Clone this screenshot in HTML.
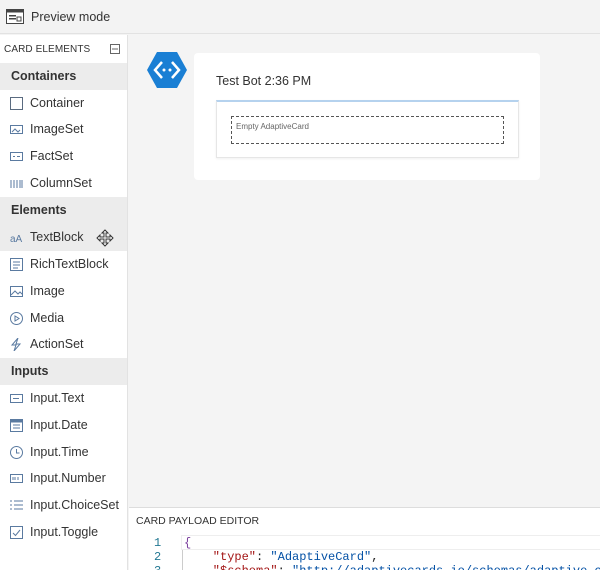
<!DOCTYPE html>
<html style="overflow:hidden;width:600px;height:570px"><head><meta charset="utf-8">
<style>
*{margin:0;padding:0;box-sizing:border-box}
body{width:600px;height:570px;overflow:hidden;font-family:"Liberation Sans",sans-serif;background:#f4f4f4;position:relative;color:#222}
.top{position:absolute;left:0;top:0;width:600px;height:34px;background:#f3f3f3;border-bottom:1px solid #e2e2e2}
.top span{position:absolute;left:31px;top:10px;font-size:12.5px;color:#333}
.side{position:absolute;left:0;top:35px;width:128px;height:535px;background:#fff;border-right:1px solid #e2e2e2;overflow:hidden}
.sh{position:absolute;left:4px;top:9px;font-size:10px;color:#333;letter-spacing:.1px}
.row{position:absolute;left:0;width:127px;height:27px;font-size:12.5px;color:#333}
.row.h{background:#ececec;font-weight:bold;padding-left:11px;line-height:27px}
.row.hv{background:#ececec}
.row .t{position:absolute;left:30px;top:6px}
.row svg{position:absolute;left:10px;top:7px}
.card{position:absolute;left:194px;top:53px;width:346px;height:127px;background:#fff;border-radius:4px}
.inner{position:absolute;left:216px;top:100px;width:303px;height:58px;background:#fff;border:1px solid #e6e6e6;border-top:2px solid #b5d2ee;box-shadow:0 1px 2px rgba(0,0,0,.06)}
.dash{position:absolute;left:231px;top:116px;width:273px;height:28px;border:1px dashed #555}
.ed{position:absolute;left:129px;top:507px;width:471px;height:63px;background:#fff;border-top:1px solid #ddd;overflow:hidden}
.code{font-family:"Liberation Mono",monospace;font-size:12px;position:absolute;white-space:pre}
</style></head><body>
<div class="top">
<svg style="position:absolute;left:6px;top:9px" width="18" height="15" viewBox="0 0 18 15"><rect x="0.5" y="0.5" width="17" height="14" fill="#fff" stroke="#444"/><rect x="0.5" y="0.5" width="17" height="3" fill="#444"/><rect x="3" y="6" width="7" height="1.5" fill="#444"/><rect x="3" y="9" width="7" height="1.5" fill="#444"/><rect x="11" y="8" width="4" height="4" fill="none" stroke="#444"/></svg>
<span>Preview mode</span></div>
<div class="side">
<div class="sh">CARD ELEMENTS</div>
<svg style="position:absolute;left:110px;top:9px" width="10" height="10"><rect x="0.5" y="0.5" width="9" height="9" fill="none" stroke="#666"/><rect x="2" y="4.5" width="6" height="1" fill="#666"/></svg>
<div class="row h" style="top:28px">Containers</div>
<div class="row" style="top:55px"><svg width="13" height="13"><rect x="0.5" y="0.5" width="12" height="12" fill="none" stroke="#5a6b80"/></svg><span class="t">Container</span></div>
<div class="row" style="top:81px"><svg width="13" height="13"><rect x="0.5" y="2.5" width="12" height="8" fill="none" stroke="#5a7aa0"/><path d="M2 9l3-3 3 3 2-2" stroke="#5a7aa0" fill="none"/></svg><span class="t">ImageSet</span></div>
<div class="row" style="top:108px"><svg width="13" height="13"><rect x="0.5" y="2.5" width="12" height="8" fill="none" stroke="#5a7aa0"/><path d="M3 6.5h2M7 6.5h3" stroke="#5a7aa0"/></svg><span class="t">FactSet</span></div>
<div class="row" style="top:135px"><svg width="13" height="13"><path d="M1 3v8M4 3v8M7 3v8M10 3v8M12 3v8" stroke="#5a7aa0"/></svg><span class="t">ColumnSet</span></div>
<div class="row h" style="top:162px">Elements</div>
<div class="row hv" style="top:189px"><svg width="16" height="13"><text x="0" y="11" font-size="10" fill="#5a7aa0" font-family="Liberation Sans">aA</text></svg><span class="t">TextBlock</span>
<svg style="left:96px;top:5px" width="18" height="18" viewBox="0 0 18 18"><path d="M9 1l3 3h-2v4h4V6l3 3-3 3v-2h-4v4h2l-3 3-3-3h2v-4H4v2L1 9l3-3v2h4V4H6z" fill="#fff" stroke="#333" stroke-width="1"/></svg></div>
<div class="row" style="top:216px"><svg width="13" height="13"><rect x="0.5" y="0.5" width="12" height="12" fill="none" stroke="#5a7aa0"/><path d="M3 4h7M3 7h7M3 10h5" stroke="#5a7aa0"/></svg><span class="t">RichTextBlock</span></div>
<div class="row" style="top:243px"><svg width="13" height="13"><rect x="0.5" y="1.5" width="12" height="10" fill="none" stroke="#5a7aa0"/><path d="M1 10l4-4 3 3 2-2 3 3" stroke="#5a7aa0" fill="none"/></svg><span class="t">Image</span></div>
<div class="row" style="top:270px"><svg width="13" height="13"><circle cx="6.5" cy="6.5" r="6" fill="none" stroke="#5a7aa0"/><path d="M5 4v5l4-2.5z" fill="none" stroke="#5a7aa0"/></svg><span class="t">Media</span></div>
<div class="row" style="top:296px"><svg width="13" height="13"><path d="M8 0L2 7h4l-2 6 6-7H6z" fill="none" stroke="#5a7aa0"/></svg><span class="t">ActionSet</span></div>
<div class="row h" style="top:323px">Inputs</div>
<div class="row" style="top:350px"><svg width="13" height="13"><rect x="0.5" y="2.5" width="12" height="8" fill="none" stroke="#5a7aa0"/><path d="M3 6.5h6" stroke="#5a7aa0"/></svg><span class="t">Input.Text</span></div>
<div class="row" style="top:377px"><svg width="13" height="13"><rect x="0.5" y="0.5" width="12" height="12" fill="none" stroke="#5a7aa0"/><rect x="0.5" y="0.5" width="12" height="3" fill="#5a7aa0"/><path d="M3 6h7M3 9h7" stroke="#5a7aa0"/></svg><span class="t">Input.Date</span></div>
<div class="row" style="top:404px"><svg width="13" height="13"><circle cx="6.5" cy="6.5" r="6" fill="none" stroke="#5a7aa0"/><path d="M6.5 3v4h3" stroke="#5a7aa0" fill="none"/></svg><span class="t">Input.Time</span></div>
<div class="row" style="top:430px"><svg width="13" height="13"><rect x="0.5" y="2.5" width="12" height="8" fill="none" stroke="#5a7aa0"/><path d="M3 5v3M5 5v3M8 5v3" stroke="#5a7aa0"/></svg><span class="t">Input.Number</span></div>
<div class="row" style="top:457px"><svg width="13" height="13"><path d="M0 2h2M4 2h9M0 6h2M4 6h9M0 10h2M4 10h9" stroke="#5a7aa0"/></svg><span class="t">Input.ChoiceSet</span></div>
<div class="row" style="top:484px"><svg width="13" height="13"><rect x="0.5" y="0.5" width="12" height="12" fill="none" stroke="#5a7aa0"/><path d="M3 7l2.5 2.5L10 4" stroke="#5a7aa0" fill="none"/></svg><span class="t">Input.Toggle</span></div>
</div>
<svg style="position:absolute;left:147px;top:52px" width="40" height="36" viewBox="0 0 40 36"><path d="M10 0h20l10 18-10 18H10L0 18z" fill="#1a7fd4"/><path d="M15 10l-7 8 7 8M25 10l7 8-7 8" stroke="#fff" stroke-width="2.5" fill="none"/><circle cx="17" cy="18" r="1.5" fill="#fff"/><circle cx="23" cy="18" r="1.5" fill="#fff"/></svg>
<div class="card"></div>
<div style="position:absolute;left:216px;top:74px;font-size:12.5px;color:#333">Test Bot 2:36 PM</div>
<div class="inner"></div>
<div class="dash"></div>
<div style="position:absolute;left:236px;top:122px;font-size:8px;color:#666">Empty AdaptiveCard</div>
<div class="ed">
<div style="position:absolute;left:7px;top:7px;font-size:10.5px;color:#333">CARD PAYLOAD EDITOR</div>
<div style="position:absolute;left:52px;top:27px;width:419px;height:15px;border:1px solid #eee;border-right:none"></div>
<div style="position:absolute;left:53px;top:42px;width:1px;height:30px;background:#ccc"></div>
<div class="code" style="left:25px;top:28px;color:#237893">1</div>
<div class="code" style="left:25px;top:42px;color:#237893">2</div>
<div class="code" style="left:25px;top:56px;color:#237893">3</div>
<div class="code" style="left:55px;top:28px;color:#7a3e9d">{</div>
<div class="code" style="left:55px;top:42px"><span style="color:#a31515">    "type"</span>: <span style="color:#0451a5">"AdaptiveCard"</span>,</div>
<div class="code" style="left:55px;top:56px"><span style="color:#a31515">    "$schema"</span>: <span style="color:#0451a5">"http://adaptivecards.io/schemas/adaptive-card.json"</span></div>
</div>
</body></html>
